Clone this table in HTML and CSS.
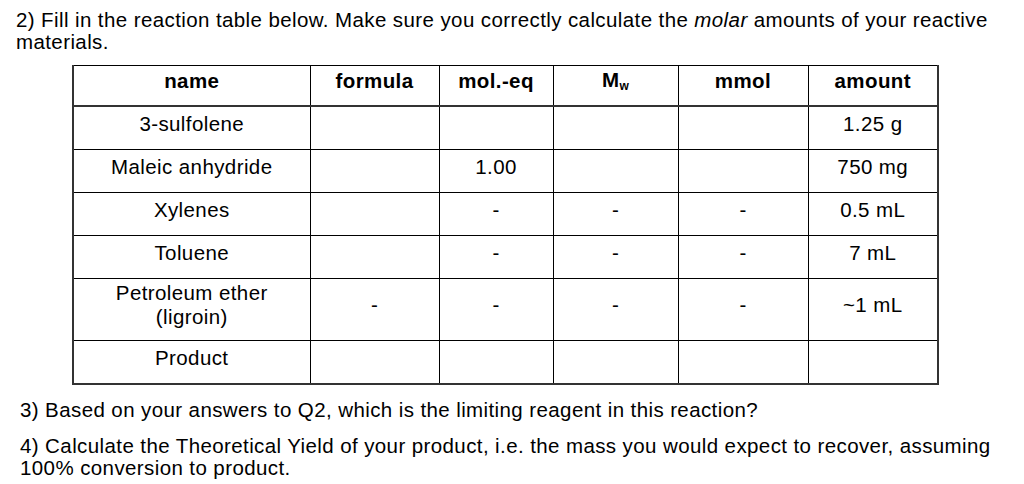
FILE: index.html
```html
<!DOCTYPE html>
<html>
<head>
<meta charset="utf-8">
<link rel="stylesheet" href="styles.css">
</head>
<body>
<div class="page">
  <p class="intro">2) Fill in the reaction table below. Make sure you correctly calculate the <em>molar</em> amounts of your reactive materials.</p>
  <table class="rxn">
    <colgroup>
      <col class="c-name"><col class="c-formula"><col class="c-eq"><col class="c-mw"><col class="c-mmol"><col class="c-amount">
    </colgroup>
    <thead>
      <tr><th>name</th><th>formula</th><th>mol.-eq</th><th>M<sub>w</sub></th><th>mmol</th><th>amount</th></tr>
    </thead>
    <tbody>
      <tr><td>3-sulfolene</td><td></td><td></td><td></td><td></td><td>1.25 g</td></tr>
      <tr><td>Maleic anhydride</td><td></td><td>1.00</td><td></td><td></td><td>750 mg</td></tr>
      <tr><td>Xylenes</td><td></td><td>-</td><td>-</td><td>-</td><td>0.5 mL</td></tr>
      <tr><td>Toluene</td><td></td><td>-</td><td>-</td><td>-</td><td>7 mL</td></tr>
      <tr class="tall"><td>Petroleum ether<br>(ligroin)</td><td>-</td><td>-</td><td>-</td><td>-</td><td>~1 mL</td></tr>
      <tr><td>Product</td><td></td><td></td><td></td><td></td><td></td></tr>
    </tbody>
  </table>
  <p class="q q3">3) Based on your answers to Q2, which is the limiting reagent in this reaction?</p>
  <p class="q q4">4) Calculate the Theoretical Yield of your product, i.e. the mass you would expect to recover, assuming 100% conversion to product.</p>
</div>
</body>
</html>
```

FILE: styles.css
```css
html, body {
  margin: 0;
  padding: 0;
  background: #ffffff;
}

.page {
  font-family: "Liberation Sans", Arial, sans-serif;
  font-size: 20.5px;
  letter-spacing: 0.4px;
  line-height: 22px;
  color: #000;
  padding-top: 9px;
}

.intro {
  margin: 0 20px 0 16px;
}

.intro em {
  font-style: italic;
}

.rxn {
  border-collapse: collapse;
  margin: 12px 0 0 72px;
  table-layout: fixed;
  width: 865px;
  border-top: 1px solid #000;
  border-left: 2px solid #333;
  border-right: 2px solid #333;
  border-bottom: 2px solid #333;
}

.c-name { width: 237px; }
.c-formula { width: 129px; }
.c-eq { width: 114px; }
.c-mw { width: 125px; }
.c-mmol { width: 130px; }
.c-amount { width: 130px; }

.rxn th, .rxn td {
  border: 1px solid #000;
  text-align: center;
  vertical-align: middle;
  padding: 0 0 9px 0;
  height: 33px;
  line-height: 24px;
}

.rxn th {
  font-weight: bold;
  height: 30px;
  border-bottom: 2px solid #333;
}

.rxn th sub {
  font-size: 12px;
  letter-spacing: 0;
  vertical-align: baseline;
  position: relative;
  top: 3px;
}

.rxn tr.tall td {
  height: 52px;
}

.q {
  margin: 0 24px 0 20px;
}

.q3 {
  margin-top: 14px;
}

.q4 {
  margin-top: 14px;
}
```
